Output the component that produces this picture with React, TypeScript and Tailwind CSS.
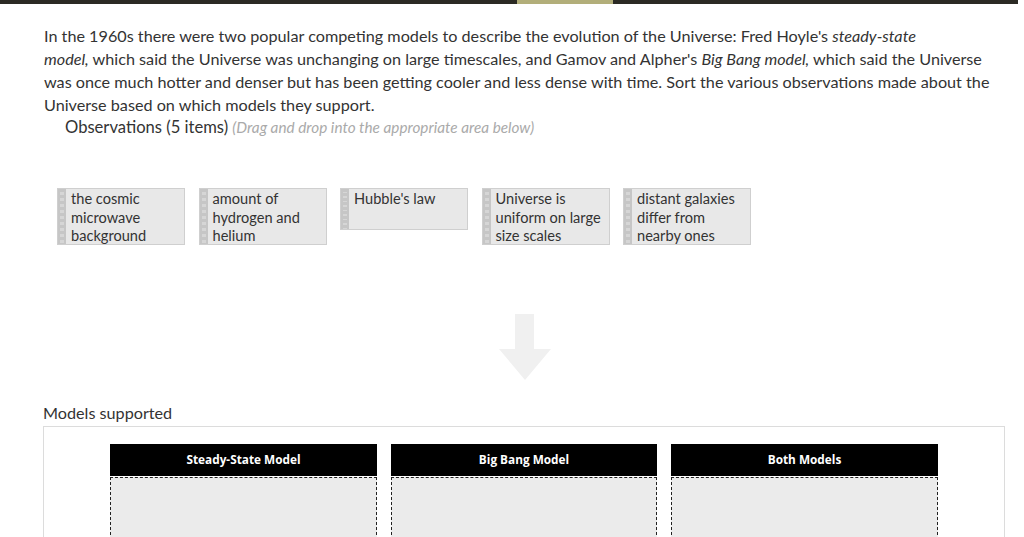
import React from "react";

const cards = [
  { text: "the cosmic microwave background", h: "h-[57px]" },
  { text: "amount of hydrogen and helium", h: "h-[57px]" },
  { text: "Hubble's law", h: "h-[42px]" },
  { text: "Universe is uniform on large size scales", h: "h-[57px]" },
  { text: "distant galaxies differ from nearby ones", h: "h-[57px]" },
];

function Grip() {
  return (
    <div className="w-[8px] shrink-0 bg-[#c6c6c6] flex flex-col items-center gap-[3px] pt-[3px] overflow-hidden">
      {Array.from({ length: 9 }).map((_, i) => (
        <div key={i} className="w-[4px] h-[3px] bg-[#d6d6d6]" />
      ))}
    </div>
  );
}

export default function App() {
  return (
    <div className="w-[1024px] h-[537px] overflow-hidden bg-white relative font-['Lato','Noto_Sans',sans-serif] text-[#333]">
      <div className="flex h-[4px] w-[1018px]">
        <div className="w-[517px] bg-[#2b2a24]" />
        <div className="w-[96px] bg-[#b2ae7a]" />
        <div className="flex-1 bg-[#2b2a24]" />
      </div>
      <div className="pl-[44px] pt-[20px]">
        <p className="w-[965px] text-[16.2px] leading-[23px] text-[#333] whitespace-nowrap">
          In the 1960s there were two popular competing models to describe the evolution of the Universe: Fred Hoyle's{" "}
          <i>steady-state</i>
          <br />
          <i>model,</i> which said the Universe was unchanging on large timescales, and Gamov and Alpher's{" "}
          <i>Big Bang model,</i> which said the Universe
          <br />
          was once much hotter and denser but has been getting cooler and less dense with time. Sort the various observations made about the
          <br />
          Universe based on which models they support.
        </p>
        <div className="pl-[21px] text-[16.6px] leading-[23px]">
          Observations (5 items){" "}
          <span className="italic text-[15.3px] text-[#aaaaaa]">(Drag and drop into the appropriate area below)</span>
        </div>
        <div className="flex items-start gap-[13.5px] ml-[13px] mt-[49px]">
          {cards.map((c, i) => (
            <div
              key={i}
              className={`flex w-[128px] ${c.h} border border-[#cfcfcf] bg-[#e8e8e8]`}
            >
              <Grip />
              <div className="pl-[5px] pr-[3px] pt-[1px] text-[14.6px] leading-[18.5px] text-[#333]">
                {c.text}
              </div>
            </div>
          ))}
        </div>
        <div className="flex justify-center w-[962px] mt-[69px]">
          <svg width="54" height="67" viewBox="0 0 54 67">
            <path d="M17 0 H36 V35 H53 L27 66 L1 35 H17 Z" fill="#f0f0f0" />
          </svg>
        </div>
        <div className="-ml-[1px] mt-[22px] text-[16.2px] leading-[20px] text-[#333]">Models supported</div>
        <div className="-ml-[1px] mt-[3px] w-[962px] h-[200px] border border-[#dcdcdc] flex justify-center gap-[14px] pt-[17px]">
          {["Steady-State Model", "Big Bang Model", "Both Models"].map((t) => (
            <div key={t} className="w-[266.5px] flex flex-col">
              <div className="h-[32px] bg-black text-white flex items-center justify-center font-['Open_Sans',sans-serif] font-bold text-[11.8px]">
                {t}
              </div>
              <div className="mt-[1px] h-[150px] border border-dashed border-[#222] bg-[#ebebeb]" />
            </div>
          ))}
        </div>
      </div>
    </div>
  );
}
